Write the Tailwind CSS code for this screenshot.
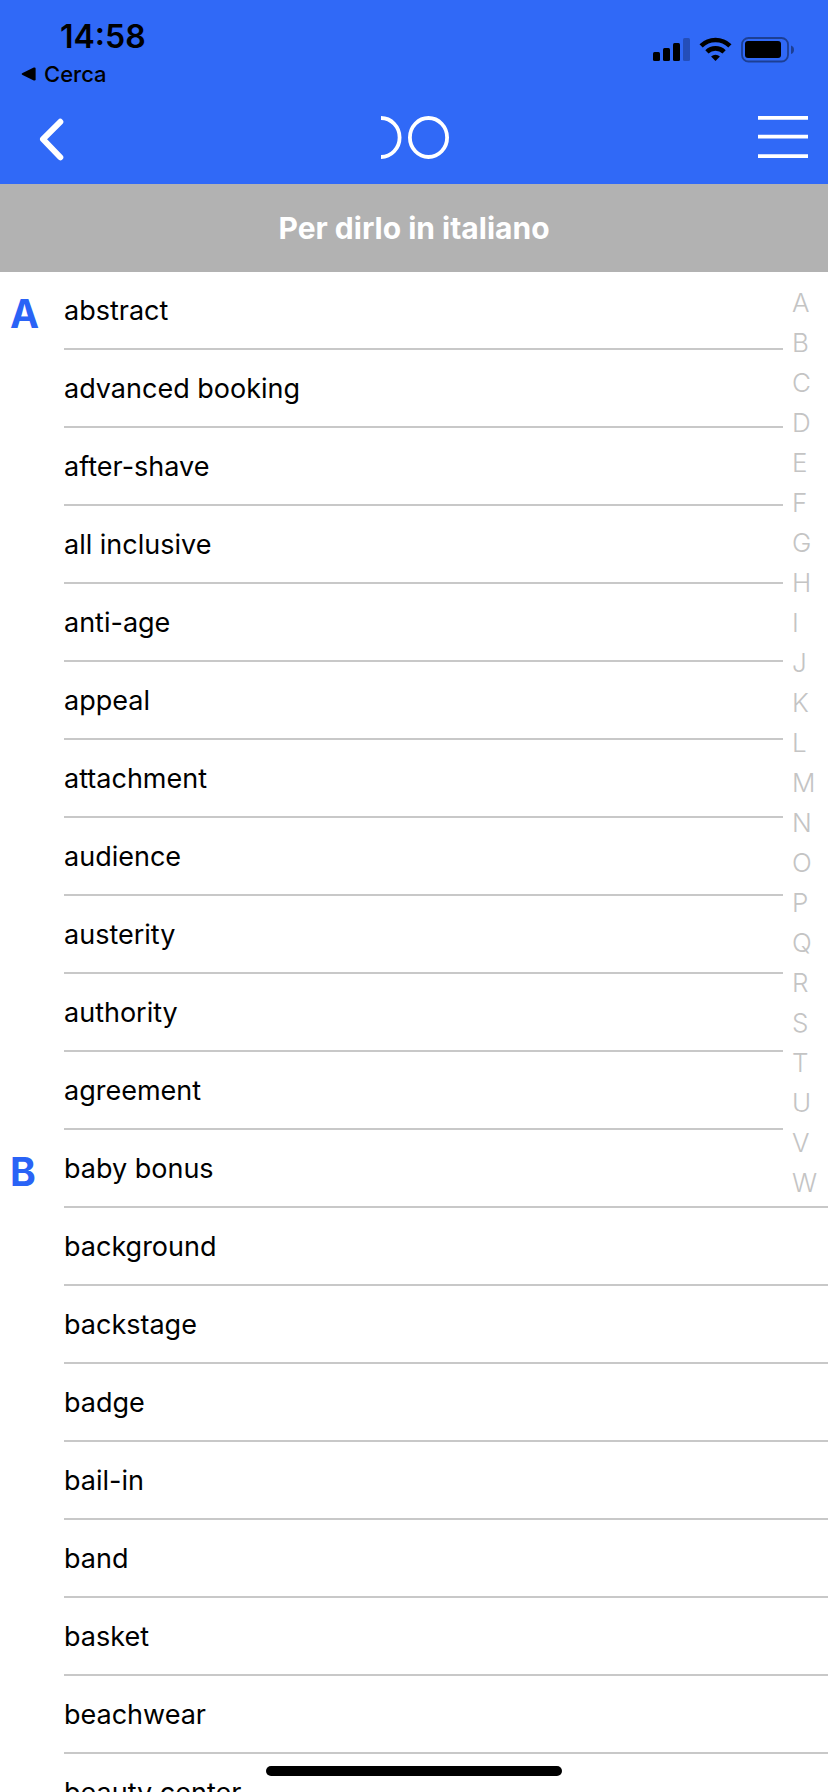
<!DOCTYPE html>
<html lang="it">
<head>
    <meta charset="UTF-8">
    <meta name="viewport" content="width=device-width, initial-scale=1.0">
    <script src="https://cdn.jsdelivr.net/npm/@tailwindcss/browser@4"></script>
    <title>Per dirlo in italiano</title>
</head>
<body class="h-screen flex flex-col overflow-hidden bg-white text-black font-['Inter','Liberation_Sans',sans-serif]">
    <header class="bg-[#3069f7] shrink-0">
        <!-- status bar -->
        <div class="h-[91px] flex justify-between pl-5 pr-[33px]">
            <div class="flex flex-col items-start pt-[17px]">
                <span class="text-[32px] leading-10 font-semibold pl-10">14:58</span>
                <a href="#" class="flex items-center gap-2 text-[22px] leading-[34px] font-medium">
                    <svg class="w-4 h-4" viewBox="0 0 16 16"><path d="M2.6 7 L13.8 1.6 Q15.6 1 15.6 2.8 V13.2 Q15.6 15 13.8 14.4 L2.6 9 Q0.6 8 2.6 7Z"/></svg>
                    Cerca
                </a>
            </div>
            <div class="flex gap-[9px] pt-9 items-start">
                <svg class="w-[37px] h-[27px]" viewBox="0 0 37 27">
                    <rect x="0" y="16" width="7" height="9" rx="1.5"/>
                    <rect x="10" y="12" width="7" height="13" rx="1.5"/>
                    <rect x="20" y="7" width="7" height="18" rx="1.5"/>
                    <rect x="30" y="2" width="7" height="23" rx="1.5" opacity=".25"/>
                </svg>
                <svg class="w-[33px] h-[27px]" viewBox="0 0 33 27" fill="none" stroke="#000" stroke-width="4.6">
                    <path d="M2.1 9.8 A20.6 20.6 0 0 1 30.9 9.8"/>
                    <path d="M7.9 15.8 A12.4 12.4 0 0 1 25.1 15.8"/>
                    <path d="M16.5 25 L12.1 20.6 A6.3 6.3 0 0 1 20.9 20.6 Z" fill="#000" stroke="none"/>
                </svg>
                <svg class="w-[54px] h-[27px]" viewBox="0 0 54 27">
                    <rect x="1" y="2" width="46" height="23.5" rx="6.5" fill="none" stroke="#000" stroke-opacity=".4" stroke-width="1.8"/>
                    <rect x="4" y="5" width="36" height="17" rx="3"/>
                    <path d="M50 9.5 Q53 10.5 53 13.7 Q53 17 50 18Z" opacity=".4"/>
                </svg>
            </div>
        </div>
        <nav class="h-[93px] grid grid-cols-[1fr_auto_1fr] items-center px-5">
            <button type="button" aria-label="Indietro" class="justify-self-start pl-[18px]">
                <svg class="w-7 h-12" viewBox="0 0 28 48" fill="none" stroke="#fff" stroke-width="6" stroke-linecap="round" stroke-linejoin="round"><path d="M22.3 7.8 L5 25.2 L22.3 43.3"/></svg>
            </button>
            <svg class="w-[69px] h-11" viewBox="0 0 69 44" fill="none" stroke="#fff" stroke-width="3.8">
                <path d="M1 2 A18.6 19.5 0 0 1 1 41"/>
                <ellipse cx="48.5" cy="21.5" rx="18.6" ry="19.5"/>
            </svg>
            <button type="button" aria-label="Menu" class="justify-self-end">
                <svg class="w-[50px] h-11" viewBox="0 0 50 44" stroke="#fff" stroke-width="3.7"><path d="M0 1.9H50M0 20.7H50M0 40.2H50"/></svg>
            </button>
        </nav>
    </header>
    <h1 class="h-[88px] shrink-0 flex items-center justify-center bg-[#b2b2b2] text-white text-[30px] font-bold">Per dirlo in italiano</h1>

    <div class="relative flex-1 min-h-0">
        <main class="h-full overflow-y-auto [scrollbar-width:none] text-[27px] leading-[74px]">
            <section id="A" class="flex">
                <h2 class="w-16 shrink-0 pl-[10px] pt-1 text-[39px] leading-[76px] font-bold text-[#2a63f6]">A</h2>
                <ul class="flex-1">
                    <li class="border-b-2 border-[#c8c8c8]"><a href="#" class="block pt-[2px]">abstract</a></li>
                    <li class="border-b-2 border-[#c8c8c8]"><a href="#" class="block pt-[2px]">advanced booking</a></li>
                    <li class="border-b-2 border-[#c8c8c8]"><a href="#" class="block pt-[2px]">after-shave</a></li>
                    <li class="border-b-2 border-[#c8c8c8]"><a href="#" class="block pt-[2px]">all inclusive</a></li>
                    <li class="border-b-2 border-[#c8c8c8]"><a href="#" class="block pt-[2px]">anti-age</a></li>
                    <li class="border-b-2 border-[#c8c8c8]"><a href="#" class="block pt-[2px]">appeal</a></li>
                    <li class="border-b-2 border-[#c8c8c8]"><a href="#" class="block pt-[2px]">attachment</a></li>
                    <li class="border-b-2 border-[#c8c8c8]"><a href="#" class="block pt-[2px]">audience</a></li>
                    <li class="border-b-2 border-[#c8c8c8]"><a href="#" class="block pt-[2px]">austerity</a></li>
                    <li class="border-b-2 border-[#c8c8c8]"><a href="#" class="block pt-[2px]">authority</a></li>
                    <li class="border-b-2 border-[#c8c8c8]"><a href="#" class="block pt-[2px]">agreement</a></li>
                </ul>
            </section>
            <section id="B" class="flex">
                <h2 class="w-16 shrink-0 pl-[10px] pt-1 text-[39px] leading-[76px] font-bold text-[#2a63f6]">B</h2>
                <ul class="flex-1">
                    <li class="border-b-2 border-[#c8c8c8]"><a href="#" class="block pt-[2px]">baby bonus</a></li>
                    <li class="border-b-2 border-[#c8c8c8]"><a href="#" class="block pt-[2px]">background</a></li>
                    <li class="border-b-2 border-[#c8c8c8]"><a href="#" class="block pt-[2px]">backstage</a></li>
                    <li class="border-b-2 border-[#c8c8c8]"><a href="#" class="block pt-[2px]">badge</a></li>
                    <li class="border-b-2 border-[#c8c8c8]"><a href="#" class="block pt-[2px]">bail-in</a></li>
                    <li class="border-b-2 border-[#c8c8c8]"><a href="#" class="block pt-[2px]">band</a></li>
                    <li class="border-b-2 border-[#c8c8c8]"><a href="#" class="block pt-[2px]">basket</a></li>
                    <li class="border-b-2 border-[#c8c8c8]"><a href="#" class="block pt-[2px]">beachwear</a></li>
                    <li class="border-b-2 border-[#c8c8c8]"><a href="#" class="block pt-[2px]">beauty center</a></li>
                </ul>
            </section>
        </main>

        <!-- alphabet index over the list -->
        <nav aria-label="Indice alfabetico" class="absolute top-0 right-0 w-[45px] pt-[11px] pl-[9px] flex flex-col bg-white text-[26px] leading-10 font-light text-[#c4c4c4]">
            <a href="#A">A</a>
            <a href="#B">B</a>
            <a href="#C">C</a>
            <a href="#D">D</a>
            <a href="#E">E</a>
            <a href="#F">F</a>
            <a href="#G">G</a>
            <a href="#H">H</a>
            <a href="#I">I</a>
            <a href="#J">J</a>
            <a href="#K">K</a>
            <a href="#L">L</a>
            <a href="#M">M</a>
            <a href="#N">N</a>
            <a href="#O">O</a>
            <a href="#P">P</a>
            <a href="#Q">Q</a>
            <a href="#R">R</a>
            <a href="#S">S</a>
            <a href="#T">T</a>
            <a href="#U">U</a>
            <a href="#V">V</a>
            <a href="#W">W</a>
        </nav>
        <div class="absolute bottom-4 left-1/2 -translate-x-1/2 w-[296px] h-[10px] rounded-full bg-black"></div>
    </div>
</body>
</html>
